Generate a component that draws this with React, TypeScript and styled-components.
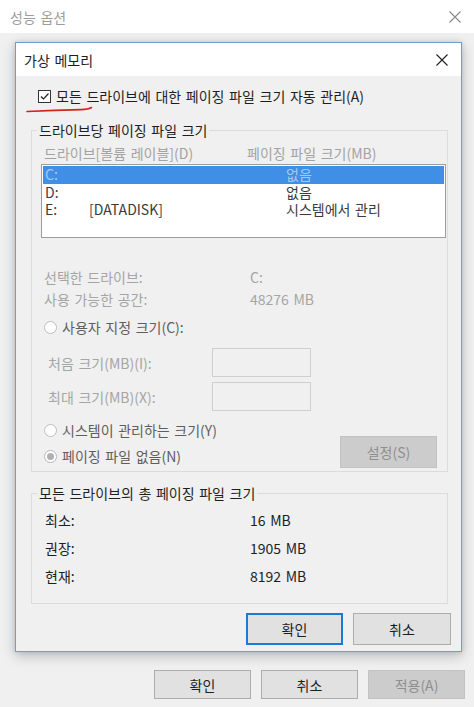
import React from "react";
import styled, { createGlobalStyle } from "styled-components";

const Global = createGlobalStyle`
  html, body { margin: 0; padding: 0; background: #f0f0f0; }
  body {
    font-family: "Noto Sans CJK KR", "Noto Sans", sans-serif;
    font-size: 14px;
    line-height: 18px;
    color: #1e1e1e;
    word-spacing: 1.5px;
  }
  * { box-sizing: border-box; }
`;

const Window = styled.div`
  width: 474px;
  height: 707px;
  display: flex;
  flex-direction: column;
  background: #f0f0f0;
  overflow: hidden;
`;

const TitleBar = styled.div<{ $inactive?: boolean }>`
  height: 33px;
  flex: none;
  background: #fff;
  display: flex;
  align-items: center;
  justify-content: space-between;
  padding: 0 13px 0 ${(p) => (p.$inactive ? "10px" : "8px")};
  color: ${(p) => (p.$inactive ? "#9d9d9d" : "#1e1e1e")};
`;

const CloseIcon = styled.svg`
  width: 12px;
  height: 12px;
  flex: none;
`;

const OuterBody = styled.div`
  flex: 1;
  display: flex;
  flex-direction: column;
  padding: 9px 9px 0 15px;
`;

const Dialog = styled.div`
  width: 447px;
  height: 610px;
  border: 1px solid #64a2dd;
  background: #f0f0f0;
  display: flex;
  flex-direction: column;
  box-shadow: 0 4px 12px rgba(0, 0, 0, 0.22), 0 0 5px rgba(0, 0, 0, 0.12);
`;

const DialogBody = styled.div`
  flex: 1;
  display: flex;
  flex-direction: column;
  padding: 0 13px 5px 15px;
`;

const CheckRow = styled.div`
  position: relative;
  height: 22px;
  margin-top: 9px;
  display: flex;
  align-items: center;
  padding-left: 7px;
  gap: 5px;
`;

const CheckBox = styled.span`
  width: 13px;
  height: 13px;
  flex: none;
  border: 1px solid #333;
  background: #fff;
  display: flex;
  align-items: center;
  justify-content: center;
`;

const Scribble = styled.svg`
  position: absolute;
  left: -6px;
  top: 18px;
  width: 70px;
  height: 10px;
  pointer-events: none;
`;

const Group = styled.fieldset<{ $mt: number; $pb: number }>`
  margin: ${(p) => p.$mt}px 0 0 0;
  padding: 0 1px ${(p) => p.$pb}px 0;
  border: 1px solid #dcdcdc;
  min-width: 0;
  display: flex;
  flex-direction: column;
`;

const Legend = styled.legend`
  margin-left: 5px;
  padding: 0 2px;
  line-height: 18px;
  color: #1e1e1e;
`;

const HeaderRow = styled.div`
  margin-top: 5px;
  height: 18px;
  display: grid;
  grid-template-columns: 203px 1fr;
  padding-left: 12px;
  color: #a3a3a3;
`;

const ListBox = styled.div`
  margin: 2px 0 0 9px;
  height: 74px;
  border: 1px solid #9c9c9c;
  background: #fff;
  padding: 1px;
`;

const ListRow = styled.div<{ $selected?: boolean }>`
  height: 17.5px;
  line-height: 17px;
  display: grid;
  grid-template-columns: 44px 197px 1fr;
  align-items: center;
  padding-left: 2px;
  background: ${(p) => (p.$selected ? "#3f8fe6" : "transparent")};
  color: ${(p) => (p.$selected ? "#a9c8ef" : "#3a3a3a")};
`;

const InfoRow = styled.div<{ $h: number; $pl: number; $col: number; $mt?: number; $muted?: boolean }>`
  height: ${(p) => p.$h}px;
  margin-top: ${(p) => p.$mt ?? 0}px;
  display: grid;
  grid-template-columns: ${(p) => p.$col}px 1fr;
  align-items: center;
  padding-left: ${(p) => p.$pl}px;
  color: ${(p) => (p.$muted ? "#a5a5a5" : "#1e1e1e")};
`;

const RadioRow = styled.div<{ $mt?: number }>`
  height: 22px;
  margin-top: ${(p) => p.$mt ?? 0}px;
  display: flex;
  align-items: center;
  gap: 5px;
  padding-left: 12px;
  color: #5e5e5e;
`;

const Radio = styled.span<{ $checked?: boolean }>`
  width: 13px;
  height: 13px;
  flex: none;
  border-radius: 50%;
  border: 1px solid ${(p) => (p.$checked ? "#b5b5b5" : "#bdbdbd")};
  background: #fff;
  display: flex;
  align-items: center;
  justify-content: center;
  &::after {
    content: "";
    width: 7px;
    height: 7px;
    border-radius: 50%;
    background: ${(p) => (p.$checked ? "#b0b0b0" : "transparent")};
  }
`;

const FieldRow = styled.div<{ $mt: number }>`
  margin-top: ${(p) => p.$mt}px;
  height: 29px;
  display: grid;
  grid-template-columns: 164px 99px;
  align-items: center;
  padding-left: 16px;
  color: #a5a5a5;
`;

const TextBox = styled.div`
  height: 29px;
  border: 1px solid #cfcfcf;
  background: #f0f0f0;
`;

const BottomRow = styled.div`
  margin-top: 8px;
  display: flex;
  justify-content: space-between;
  align-items: flex-end;
`;

const RadioCol = styled.div`
  display: flex;
  flex-direction: column;
  gap: 4px;
`;

const Button = styled.div<{ $w?: number; $h?: number; $focus?: boolean; $disabled?: boolean }>`
  width: ${(p) => p.$w ?? 97}px;
  height: ${(p) => p.$h ?? 32}px;
  flex: none;
  display: flex;
  align-items: center;
  justify-content: center;
  background: ${(p) => (p.$disabled ? "#cccccc" : "#e1e1e1")};
  border: ${(p) => (p.$focus ? "2px solid #1a7bd6" : p.$disabled ? "1px solid #c2c2c2" : "1px solid #adadad")};
  color: ${(p) => (p.$disabled ? "#8f8f8f" : "#1e1e1e")};
`;

const SetButton = styled(Button)`
  margin: 0 9px -1px 0;
`;

const DialogButtons = styled.div`
  margin: 9px -3px 0 0;
  display: flex;
  justify-content: flex-end;
  gap: 10px;
`;

const OuterButtons = styled.div`
  margin-top: 18px;
  display: flex;
  justify-content: flex-end;
  gap: 10px;
`;

const Close = ({ color }: { color: string }) => (
  <CloseIcon viewBox="0 0 12 12">
    <path d="M0.5 0.5 L11.5 11.5 M11.5 0.5 L0.5 11.5" stroke={color} strokeWidth="1.1" fill="none" />
  </CloseIcon>
);

export default function App() {
  return (
    <>
      <Global />
      <Window>
        <TitleBar $inactive>
          <span>성능 옵션</span>
          <Close color="#8a8a8a" />
        </TitleBar>
        <OuterBody>
          <Dialog>
            <TitleBar>
              <span>가상 메모리</span>
              <Close color="#1e1e1e" />
            </TitleBar>
            <DialogBody>
              <CheckRow>
                <CheckBox>
                  <svg width="11" height="11" viewBox="0 0 11 11">
                    <path d="M2 5.5 L4.5 8 L9.5 2.5" stroke="#222" strokeWidth="1.2" fill="none" />
                  </svg>
                </CheckBox>
                <span>모든 드라이브에 대한 페이징 파일 크기 자동 관리(A)</span>
                <Scribble viewBox="0 0 70 10">
                  <path d="M2 8.5 Q30 7.2 56 6.6 Q63 6.4 66.5 4.5" stroke="#d3231b" strokeWidth="1.6" fill="none" strokeLinecap="round" />
                </Scribble>
              </CheckRow>

              <Group $mt={14} $pb={4}>
                <Legend>드라이브당 페이징 파일 크기</Legend>
                <HeaderRow>
                  <span>드라이브[볼륨 레이블](D)</span>
                  <span>페이징 파일 크기(MB)</span>
                </HeaderRow>
                <ListBox>
                  <ListRow $selected>
                    <span>C:</span>
                    <span></span>
                    <span>없음</span>
                  </ListRow>
                  <ListRow>
                    <span>D:</span>
                    <span></span>
                    <span>없음</span>
                  </ListRow>
                  <ListRow>
                    <span>E:</span>
                    <span>[DATADISK]</span>
                    <span>시스템에서 관리</span>
                  </ListRow>
                </ListBox>
                <InfoRow $h={22} $pl={12} $col={206} $mt={28} $muted>
                  <span>선택한 드라이브:</span>
                  <span>C:</span>
                </InfoRow>
                <InfoRow $h={22} $pl={12} $col={206} $muted>
                  <span>사용 가능한 공간:</span>
                  <span>48276 MB</span>
                </InfoRow>
                <RadioRow $mt={6}>
                  <Radio />
                  <span>사용자 지정 크기(C):</span>
                </RadioRow>
                <FieldRow $mt={10}>
                  <span>처음 크기(MB)(I):</span>
                  <TextBox />
                </FieldRow>
                <FieldRow $mt={5}>
                  <span>최대 크기(MB)(X):</span>
                  <TextBox />
                </FieldRow>
                <BottomRow>
                  <RadioCol>
                    <RadioRow>
                      <Radio />
                      <span>시스템이 관리하는 크기(Y)</span>
                    </RadioRow>
                    <RadioRow>
                      <Radio $checked />
                      <span>페이징 파일 없음(N)</span>
                    </RadioRow>
                  </RadioCol>
                  <SetButton $disabled>설정(S)</SetButton>
                </BottomRow>
              </Group>

              <Group $mt={12} $pb={13}>
                <Legend>모든 드라이브의 총 페이징 파일 크기</Legend>
                <InfoRow $h={28} $pl={13} $col={205} $mt={4}>
                  <span>최소:</span>
                  <span>16 MB</span>
                </InfoRow>
                <InfoRow $h={28} $pl={13} $col={205}>
                  <span>권장:</span>
                  <span>1905 MB</span>
                </InfoRow>
                <InfoRow $h={28} $pl={13} $col={205}>
                  <span>현재:</span>
                  <span>8192 MB</span>
                </InfoRow>
              </Group>

              <DialogButtons>
                <Button $focus>확인</Button>
                <Button $w={98}>취소</Button>
              </DialogButtons>
            </DialogBody>
          </Dialog>
          <OuterButtons>
            <Button $h={29}>확인</Button>
            <Button $h={29}>취소</Button>
            <Button $h={29} $disabled>적용(A)</Button>
          </OuterButtons>
        </OuterBody>
      </Window>
    </>
  );
}
